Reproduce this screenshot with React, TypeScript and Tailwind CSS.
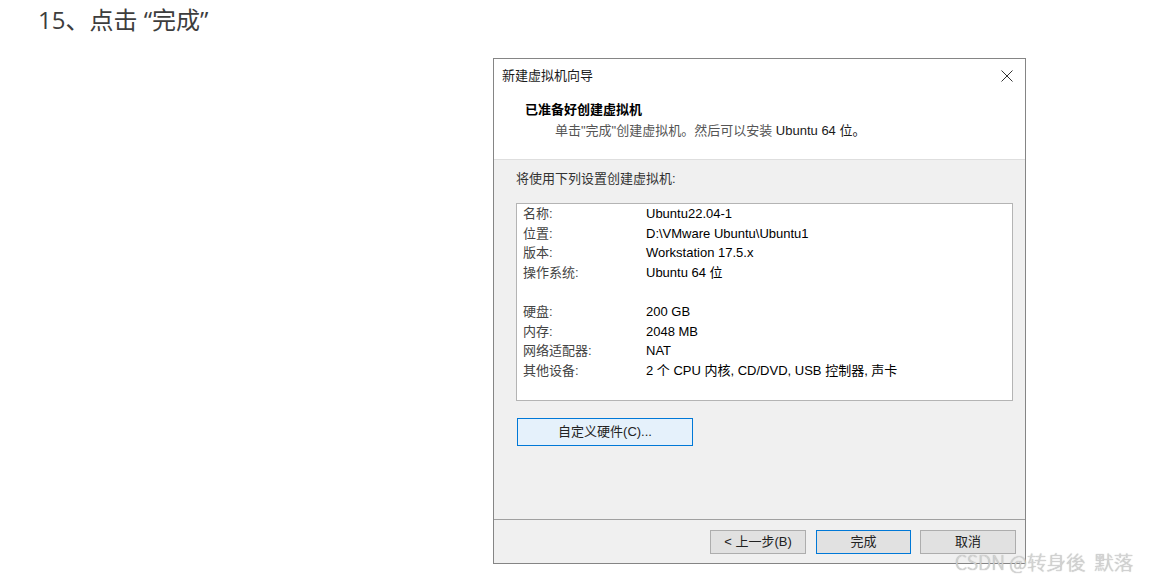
import React from "react";

const F = { fontFamily: '"Liberation Sans","Noto Sans CJK SC",sans-serif' };

const rows: [string, string][] = [
  ["名称:", "Ubuntu22.04-1"],
  ["位置:", "D:\\VMware Ubuntu\\Ubuntu1"],
  ["版本:", "Workstation 17.5.x"],
  ["操作系统:", "Ubuntu 64 位"],
  ["", ""],
  ["硬盘:", "200 GB"],
  ["内存:", "2048 MB"],
  ["网络适配器:", "NAT"],
  ["其他设备:", "2 个 CPU 内核, CD/DVD, USB 控制器, 声卡"],
];

export default function App() {
  return (
    <div className="relative w-[1154px] h-[581px] bg-white overflow-hidden">
      <div
        className="pl-[38px] pt-[4px] h-[58px] text-[24px] leading-[32px] text-[#3d3d3d]"
        style={{ fontFamily: '"Open Sans","Noto Sans CJK SC",sans-serif' }}
      >
        15、点击 “完成”
      </div>
      <div
        className="ml-[493px] w-[533px] h-[506px] border border-[#858585] flex flex-col text-[13px] text-[#1a1a1a]"
        style={F}
      >
        <div className="bg-white h-[101px] border-b border-[#dedede] flex flex-col">
          <div className="h-[34px] flex items-center justify-between pl-[8px] pr-[10px]">
            <span className="text-[13px]">新建虚拟机向导</span>
            <svg width="14" height="14" viewBox="0 0 14 14" className="mr-[1px]">
              <path d="M1.5 1.5 L12.5 12.5 M12.5 1.5 L1.5 12.5" stroke="#333" strokeWidth="1" fill="none" />
            </svg>
          </div>
          <div className="pl-[31px] mt-[7px] h-[20px] leading-[20px] font-bold text-[13px] text-black">
            已准备好创建虚拟机
          </div>
          <div className="pl-[61px] h-[21px] leading-[21px] text-[#555]">
            单击"完成"创建虚拟机。然后可以安装 <span className="text-[#1a1a1a]">Ubuntu 64 位。</span>
          </div>
        </div>
        <div className="flex-1 bg-[#f0f0f0] flex flex-col pl-[22px] pt-[9px]">
          <div className="h-[20px] leading-[20px] text-[#333]">将使用下列设置创建虚拟机:</div>
          <div className="mt-[14px] w-[497px] h-[198px] bg-white border border-[#b4b4b4] pl-[6px]">
            {rows.map(([k, v], i) => (
              <div key={i} className="flex h-[19.6px] leading-[19.6px]">
                <span className="w-[123px] text-[#444]">{k}</span>
                <span className="text-black">{v}</span>
              </div>
            ))}
          </div>
          <button className="mt-[17px] ml-[1px] w-[176px] h-[28px] bg-[#e5f1fb] border border-[#0078d7] text-[#222] text-[13px]">
            自定义硬件(C)...
          </button>
        </div>
        <div className="h-[44px] bg-[#f0f0f0] border-t border-[#a0a0a0] flex items-center justify-end pr-[9px]">
          <button className="w-[96px] h-[24px] bg-[#e1e1e1] border border-[#adadad] text-[13px] text-[#222]">
            &lt; 上一步(B)
          </button>
          <button className="ml-[10px] w-[95px] h-[24px] bg-[#e1e1e1] border border-[#0078d7] text-[13px] text-[#222]">
            完成
          </button>
          <button className="ml-[9px] w-[96px] h-[24px] bg-[#e1e1e1] border border-[#adadad] text-[13px] text-[#222]">
            取消
          </button>
        </div>
      </div>
      <div
        className="absolute left-[955px] top-[549px] text-[19.5px] leading-[26px] font-light text-[#d4d4d4] whitespace-pre [text-shadow:0_0_1px_#a0a0a0]"
        style={{ fontFamily: '"Noto Sans CJK SC",sans-serif' }}
      >
        CSDN @转身後  默落
      </div>
    </div>
  );
}
